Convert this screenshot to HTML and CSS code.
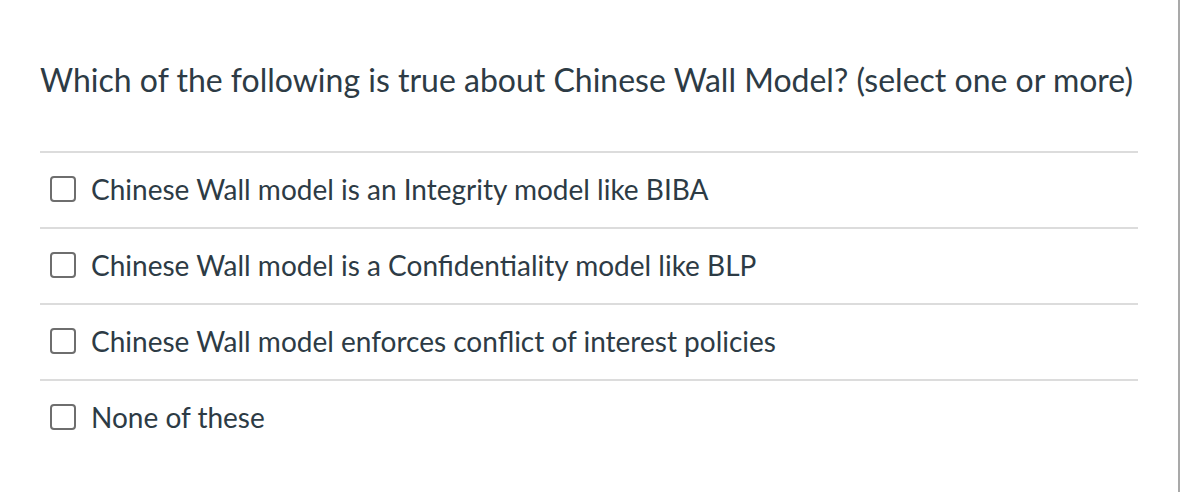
FILE: index.html
```html
<!DOCTYPE html>
<html>
<head>
<meta charset="utf-8">
<link rel="stylesheet" href="styles.css">
</head>
<body>
<div class="page">
  <div class="question">
    <p class="question-text">Which of the following is true about Chinese Wall Model? (select one or more)</p>
    <div class="answers">
      <label class="answer"><span class="box"></span><span class="answer-text">Chinese Wall model is an Integrity model like BIBA</span></label>
      <label class="answer"><span class="box"></span><span class="answer-text">Chinese Wall model is a Confidentiality model like BLP</span></label>
      <label class="answer"><span class="box"></span><span class="answer-text">Chinese Wall model enforces conflict of interest policies</span></label>
      <label class="answer"><span class="box"></span><span class="answer-text">None of these</span></label>
    </div>
  </div>
</div>
</body>
</html>
```
FILE: styles.css
```css
html, body {
  margin: 0;
  padding: 0;
  background: #fff;
}
body {
  font-family: Lato, "Open Sans", sans-serif;
  color: #2d3b45;
}
.page {
  width: 1178px;
  height: 492px;
  border-right: 2px solid #a9a9a9;
  box-sizing: content-box;
}
.question {
  padding: 0 40px 0 40px;
  width: 1098px;
}
.question-text {
  margin: 0;
  padding-top: 56px;
  font-size: 32px;
  line-height: 48px;
  height: 95px;
}
.answers {
  display: flex;
  flex-direction: column;
}
.answer {
  display: flex;
  align-items: center;
  gap: 15px;
  height: 71px;
  padding-bottom: 3px;
  border-top: 2px solid #dcdcdc;
  padding-left: 10px;
}
.box {
  width: 22px;
  height: 22px;
  border: 2px solid #6e6e6e;
  border-radius: 4px;
  flex: none;
}
.answer-text {
  font-size: 28px;
  line-height: 36px;
}
```
